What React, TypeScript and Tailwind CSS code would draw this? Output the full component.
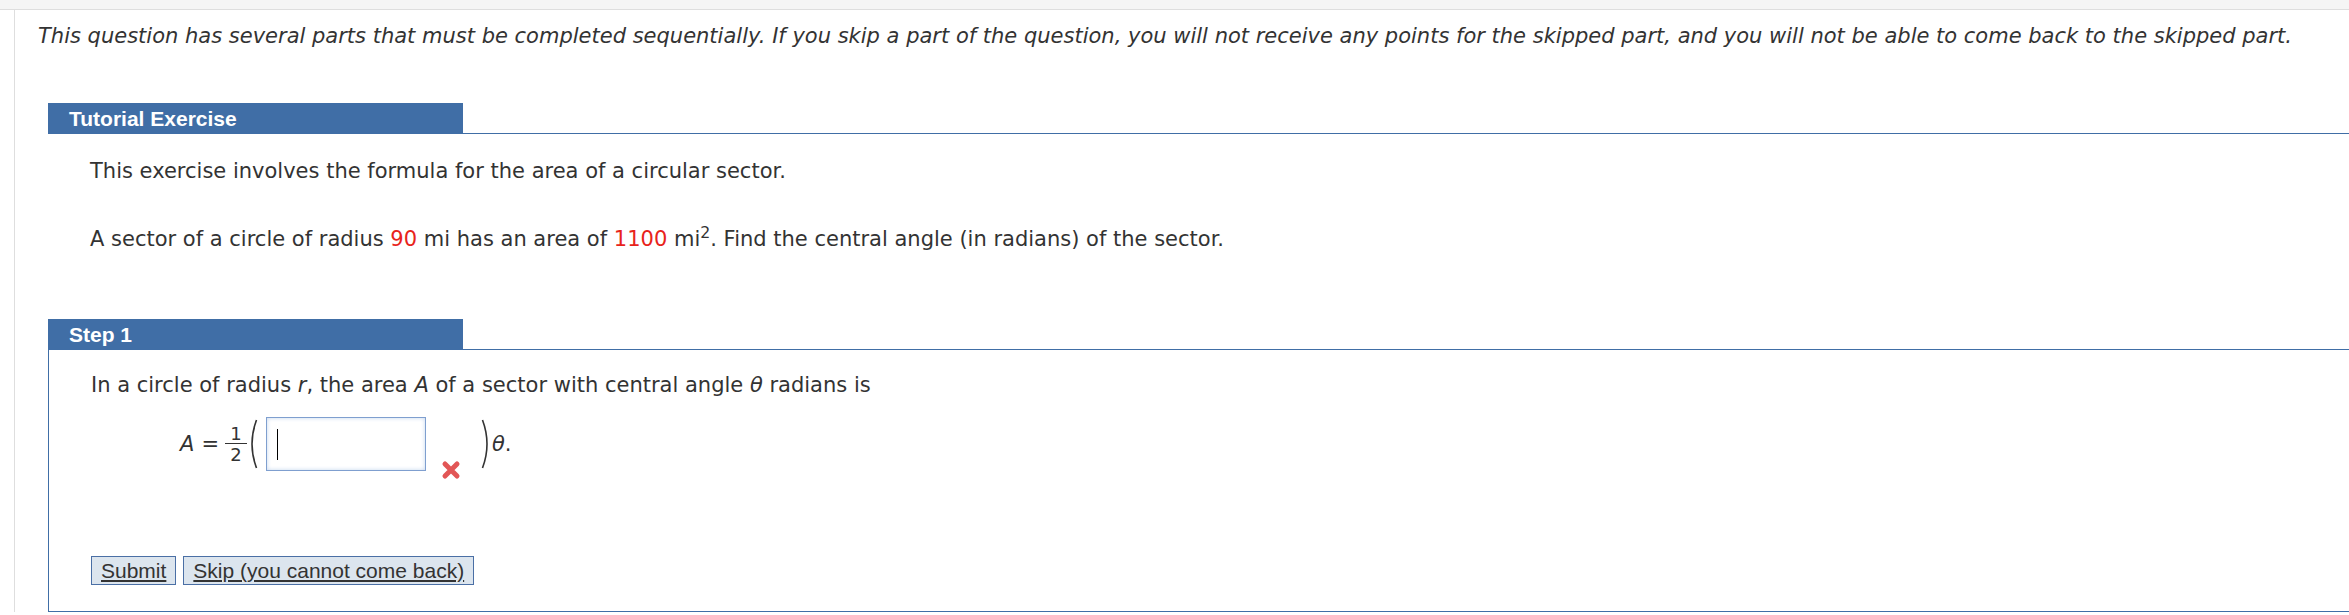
const sans = { fontFamily: '"DejaVu Sans", Verdana, sans-serif' };

function SectionHeader({ title }: { title: string }) {
  return (
    <div className="flex items-end">
      <div className="flex h-[31px] w-[415px] items-center bg-[#406ea6] pl-[21px] font-['Liberation_Sans',Arial,sans-serif] text-[21px] font-bold text-white">
        {title}
      </div>
      <div className="flex-1 border-b border-[#406ea6]" />
    </div>
  );
}

function Paren({ flip }: { flip?: boolean }) {
  return (
    <svg width="11" height="50" viewBox="0 0 11 50" className={flip ? "-scale-x-100" : ""}>
      <path d="M9.5 1 Q0.5 25 9.5 49" fill="none" stroke="#333" strokeWidth="1.6" />
    </svg>
  );
}

function RedX() {
  return (
    <svg width="20" height="20" viewBox="0 0 20 20">
      <path d="M4 4 L16 16 M16 4 L4 16" stroke="#e25656" strokeWidth="5" strokeLinecap="round" />
    </svg>
  );
}

export default function App() {
  return (
    <div className="min-h-[615px] w-full overflow-hidden bg-white text-[#333]" style={sans}>
      <div className="h-[10px] border-b border-[#dedede] bg-[#f5f5f5]" />
      <div className="ml-[14px] border-l border-[#dedede] pt-[14px]">
        <p className="pl-[23px] text-[21px] leading-[24px] italic">
          This question has several parts that must be completed sequentially. If you skip a part of the question, you
          will not receive any points for the skipped part, and you will not be able to come back to the skipped part.
        </p>

        <section className="ml-[33px] mt-[55px]">
          <SectionHeader title="Tutorial Exercise" />
          <div className="pl-[42px] pt-[25px] text-[21px] leading-[24px]">
            <p>This exercise involves the formula for the area of a circular sector.</p>
            <p className="mt-[44px]">
              A sector of a circle of radius <span className="text-[#e8231b]">90</span> mi has an area of{" "}
              <span className="text-[#e8231b]">1100</span> mi<sup>2</sup>. Find the central angle (in radians) of the
              sector.
            </p>
          </div>
        </section>

        <section className="ml-[33px] mt-[68px]">
          <SectionHeader title="Step 1" />
          <div className="border-b border-l border-[#406ea6] pb-[26px] pl-[42px] pt-[23px] text-[21px] leading-[24px]">
            <p>
              In a circle of radius <i>r</i>, the area <i>A</i> of a sector with central angle <i>θ</i> radians is
            </p>

            <div className="ml-[89px] mt-[20px] flex h-[54px] items-center">
              <i>A</i>
              <span className="ml-[7px]">=</span>
              <div className="ml-[6px] flex w-[22px] flex-col items-center text-[18px] leading-[18px]">
                <span>1</span>
                <span className="h-px w-full bg-[#333]" />
                <span className="mt-[2px]">2</span>
              </div>
              <Paren />
              <div className="ml-[8px] flex h-[54px] w-[160px] items-center border border-[#7f9fcf] bg-white pl-[10px] shadow-[inset_0_0_4px_#c4d6ee]">
                <span className="h-[31px] w-px bg-black" />
              </div>
              <div className="-mb-[9px] ml-[15px] self-end">
                <RedX />
              </div>
              <div className="ml-[20px]">
                <Paren flip />
              </div>
              <span>
                <i>θ</i>.
              </span>
            </div>

            <div className="mt-[85px] flex gap-[7px] font-['Liberation_Sans',Arial,sans-serif] text-[21px] leading-[27px]">
              <button className="border border-[#4a6fa5] bg-[#dce5ee] px-[9px] text-[#333] underline">Submit</button>
              <button className="border border-[#4a6fa5] bg-[#dce5ee] px-[9px] text-[#333] underline">
                Skip (you cannot come back)
              </button>
            </div>
          </div>
        </section>
      </div>
    </div>
  );
}
